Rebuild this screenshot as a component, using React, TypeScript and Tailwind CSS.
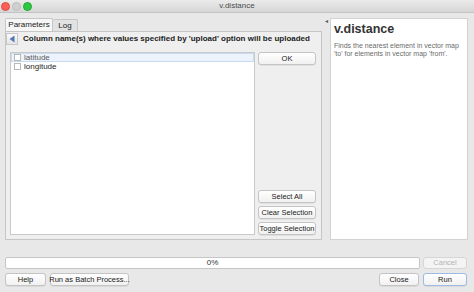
const font = { fontFamily: '"Liberation Sans", Arial, sans-serif' };

function Btn({ label, className = '', primary }: { label: string; className?: string; primary?: boolean }) {
  return (
    <div
      className={`flex items-center justify-center h-[13px] rounded-[3px] border ${primary ? 'border-[#9dbbe3]' : 'border-[#c4c4c4]'} bg-gradient-to-b from-[#ffffff] to-[#f1f1f1] text-[7.5px] leading-none whitespace-nowrap text-[#222] shadow-[0_0.5px_0.5px_rgba(0,0,0,0.12)] ${className}`}
    >
      {label}
    </div>
  );
}

function Row({ label, selected }: { label: string; selected?: boolean }) {
  return (
    <div
      className={`flex items-center h-[9px] ${selected ? 'bg-[#edf3fc] border border-[#c9d9ee]' : 'border border-transparent'}`}
    >
      <span className="ml-[2px] w-[7px] h-[7px] border border-[#b9b9b9] bg-white" />
      <span className={`ml-[3px] text-[8px] leading-none ${selected ? 'text-[#5a5a5a]' : 'text-[#1e1e1e]'}`}>
        {label}
      </span>
    </div>
  );
}

export default function App() {
  return (
    <div className="w-[474px] h-[292px] bg-[#e8e8e8] flex flex-col overflow-hidden" style={font}>
      {/* title bar */}
      <div className="h-[13px] grid grid-cols-[1fr_auto_1fr] items-center bg-gradient-to-b from-[#ebebeb] to-[#d6d6d6] border-b border-[#c3c3c3]">
        <div className="flex items-center gap-[2px] pl-[1px]">
          <span className="w-[9px] h-[9px] rounded-full bg-[#fc5f57] border border-[#df4a42]" />
          <span className="w-[9px] h-[9px] rounded-full bg-[#d0d0d0] border border-[#bdbdbd]" />
          <span className="w-[9px] h-[9px] rounded-full bg-[#2cc841] border border-[#1fa831]" />
        </div>
        <div className="text-[8px] leading-none text-[#4c4c4c]">v.distance</div>
        <div />
      </div>

      {/* main area */}
      <div className="flex pt-[5px] pl-[5px]">
        <div className="w-[317px] flex flex-col">
          {/* tabs */}
          <div className="flex h-[13px] items-end">
            <div className="w-[48px] h-[13px] flex items-center justify-center bg-[#f6f6f6] border border-b-0 border-[#c6c6c6] rounded-t-[2px] text-[8px] leading-none text-[#222]">
              Parameters
            </div>
            <div className="w-[25px] h-[12px] flex items-center justify-center bg-[#e2e2e2] border border-b-0 border-l-0 border-[#c6c6c6] rounded-t-[2px] text-[8px] leading-none text-[#222]">
              Log
            </div>
          </div>
          {/* pane */}
          <div className="h-[209px] border border-[#c6c6c6] bg-[#efefef] flex flex-col">
            <div className="flex items-center h-[13px]">
              <div className="w-[12px] h-[12px] flex items-center justify-center bg-gradient-to-b from-[#fafafa] to-[#e4e4e4] border border-[#c8c8c8]">
                <svg width="6" height="8" viewBox="0 0 6 8">
                  <path d="M5.5 0.5 L0.5 4 L5.5 7.5 Z" fill="#4f79b2" />
                </svg>
              </div>
              <span className="ml-[5px] text-[8px] leading-none font-semibold text-[#1c1c1c] whitespace-nowrap">
                Column name(s) where values specified by 'upload' option will be uploaded
              </span>
            </div>
            <div className="flex mt-[7px] pl-[4px] pr-[5px] gap-[3px] h-[184px]">
              <div className="w-[245px] h-[183px] bg-white border border-[#c9c9c9] flex flex-col">
                <Row label="latitude" selected />
                <Row label="longitude" />
              </div>
              <div className="w-[58px] flex flex-col">
                <Btn label="OK" />
                <div className="flex-1" />
                <Btn label="Select All" />
                <Btn label="Clear Selection" className="mt-[3px]" />
                <Btn label="Toggle Selection" className="mt-[3px] mb-[1px]" />
              </div>
            </div>
          </div>
        </div>
        {/* collapse arrow */}
        <div className="w-[8px] flex justify-center">
          <span className="text-[6px] leading-none text-[#555]">◂</span>
        </div>
        {/* help panel */}
        <div className="w-[138px] h-[222px] bg-white border border-[#d2d2d2] px-[3px] pt-[4px]">
          <div className="text-[12.5px] leading-none font-bold text-[#333]">v.distance</div>
          <p className="mt-[6px] text-[7px] leading-[8.5px] text-[#6b6b6b]">
            Finds the nearest element in vector map 'to' for elements in vector map 'from'.
          </p>
        </div>
      </div>

      {/* progress */}
      <div className="flex mt-[17px] pl-[5px] gap-[3px] h-[12px]">
        <div className="w-[415px] h-[12px] bg-white border border-[#c6c6c6] rounded-[2px] flex items-center justify-center text-[8px] leading-none text-[#333]">
          0%
        </div>
        <div className="w-[44px] h-[12px] flex items-center justify-center rounded-[3px] border border-[#d6d6d6] bg-[#f4f4f4] text-[7.5px] leading-none text-[#b4b4b4]">
          Cancel
        </div>
      </div>

      {/* bottom buttons */}
      <div className="flex mt-[4px] pl-[5px] h-[13px]">
        <Btn label="Help" className="w-[41px]" />
        <Btn label="Run as Batch Process..." className="w-[79px] ml-[4px]" />
        <div className="flex-1" />
        <Btn label="Close" className="w-[40px]" />
        <Btn label="Run" primary className="w-[44px] ml-[4px] mr-[7px]" />
      </div>
    </div>
  );
}
